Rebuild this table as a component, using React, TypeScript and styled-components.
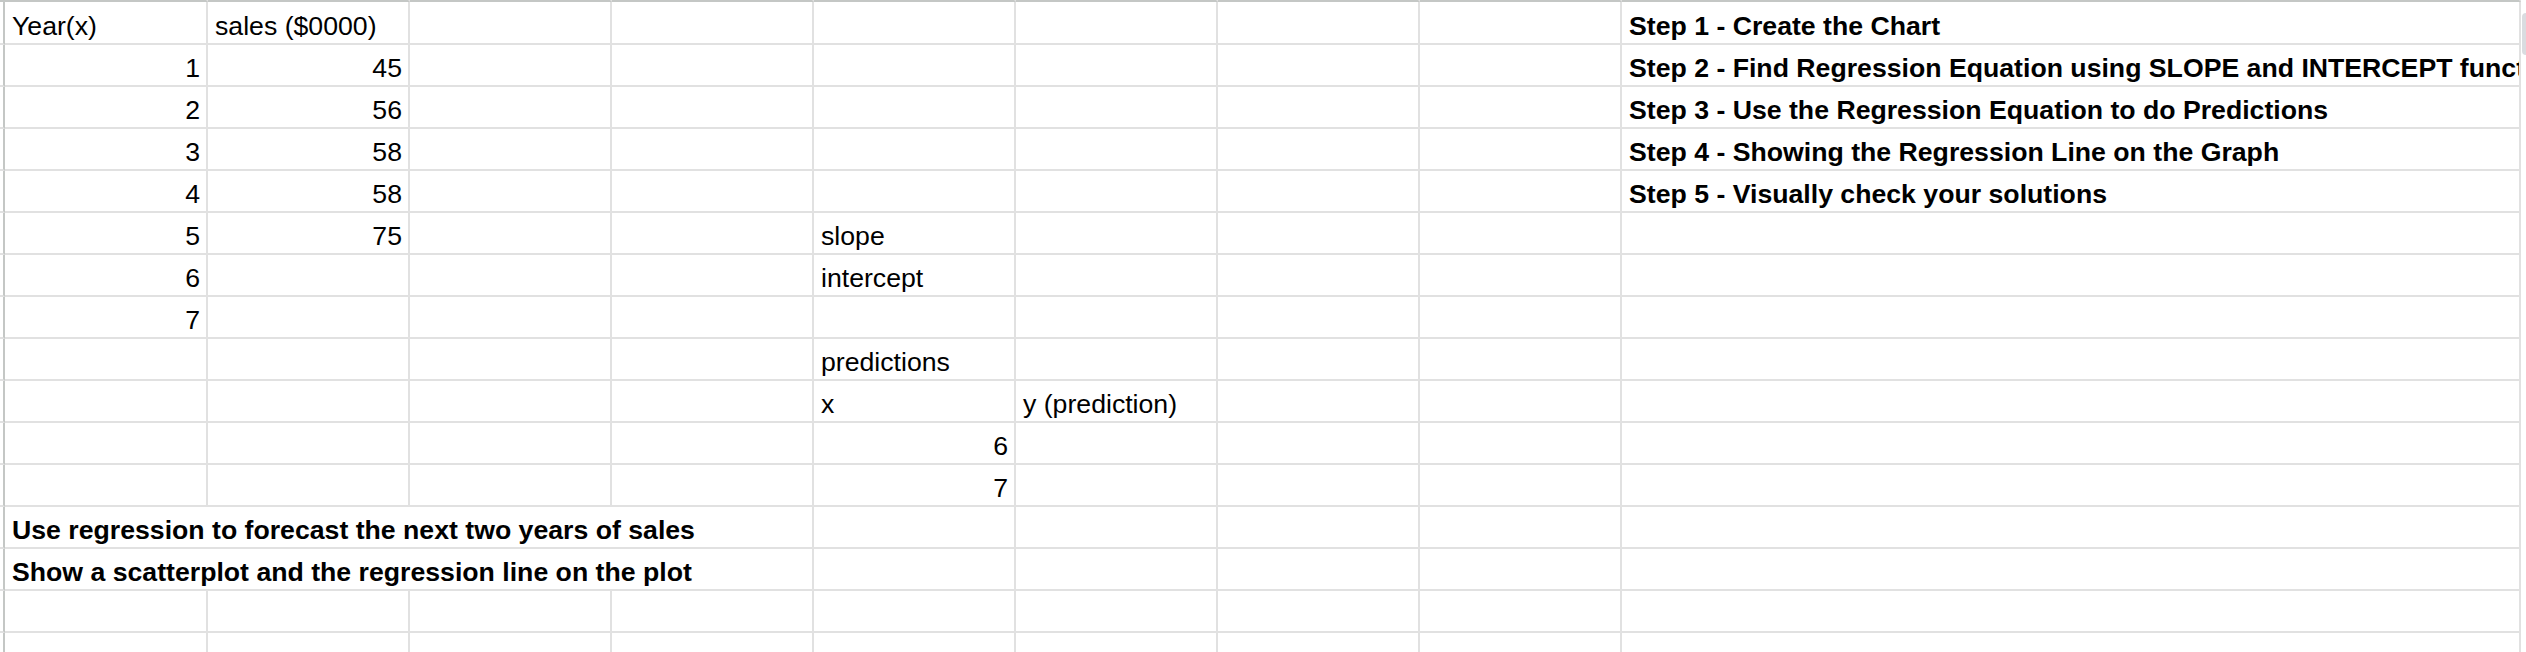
import styled, { createGlobalStyle } from "styled-components";

const GlobalStyle = createGlobalStyle`
html, body {
  margin: 0;
  padding: 0;
  background: #ffffff;
}
body {
  width: 2526px;
  height: 652px;
  overflow: hidden;
  font-family: "Liberation Sans", Arial, sans-serif;
  color: #000;
}
* {
  box-sizing: border-box;
}
`;

const COLS = "5px 203px repeat(7, 202px) 899px";
const GRID_LINE = "#e1e1e1";
const HEAD_LINE = "#c4c7c5";

const Page = styled.div`
  display: flex;
  width: 2526px;
  height: 652px;
  overflow: hidden;
`;

const Sheet = styled.div`
  display: flex;
  flex-direction: column;
  width: 2521px;
`;

const HeaderStrip = styled.div`
  display: grid;
  grid-template-columns: ${COLS};
  height: 6px;
`;

const Corner = styled.div`
  background: #f8f9fa;
  border-right: 2px solid ${HEAD_LINE};
  border-bottom: 2px solid ${HEAD_LINE};
`;

const ColHead = styled.div<{ $selected?: boolean }>`
  background: ${(p) => (p.$selected ? "#d3e3fd" : "#ffffff")};
  border-right: 2px solid ${GRID_LINE};
  border-bottom: 2px solid ${HEAD_LINE};
`;

const Row = styled.div<{ $h: number }>`
  display: grid;
  grid-template-columns: ${COLS};
  height: ${(p) => p.$h}px;
  flex-shrink: 0;
`;

const Gutter = styled.div`
  border-right: 2px solid ${HEAD_LINE};
  border-bottom: 2px solid ${GRID_LINE};
`;

const Cell = styled.div<{ $num?: boolean; $bold?: boolean; $span?: number }>`
  grid-column: span ${(p) => p.$span ?? 1};
  display: flex;
  align-items: flex-end;
  justify-content: ${(p) => (p.$num ? "flex-end" : "flex-start")};
  padding: 0 6px 2px 7px;
  border-right: 2px solid ${GRID_LINE};
  border-bottom: 2px solid ${GRID_LINE};
  font-size: 26.67px;
  line-height: 30px;
  font-weight: ${(p) => (p.$bold ? 700 : 400)};
  white-space: nowrap;
  overflow: hidden;
`;

const ScrollTrack = styled.div`
  width: 5px;
  display: flex;
  flex-direction: column;
  padding-top: 13px;
  border-top: 6px solid transparent;
`;

const ScrollThumb = styled.div`
  width: 4px;
  height: 42px;
  margin-left: 1px;
  margin-top: -6px;
  border-radius: 4px 0 0 4px;
  background: #dadce0;
`;

type CellData = { v?: string; num?: boolean; bold?: boolean; span?: number };

const e = (): CellData => ({});
const t = (v: string): CellData => ({ v });
const n = (v: string): CellData => ({ v, num: true });
const b = (v: string, span = 1): CellData => ({ v, bold: true, span });

const rows: CellData[][] = [
  [t("Year(x)"), t("sales ($0000)"), e(), e(), e(), e(), e(), e(), b("Step 1 - Create the Chart")],
  [n("1"), n("45"), e(), e(), e(), e(), e(), e(), b("Step 2 - Find Regression Equation using SLOPE and INTERCEPT functions")],
  [n("2"), n("56"), e(), e(), e(), e(), e(), e(), b("Step 3 - Use the Regression Equation to do Predictions")],
  [n("3"), n("58"), e(), e(), e(), e(), e(), e(), b("Step 4 - Showing the Regression Line on the Graph")],
  [n("4"), n("58"), e(), e(), e(), e(), e(), e(), b("Step 5 - Visually check your solutions")],
  [n("5"), n("75"), e(), e(), t("slope"), e(), e(), e(), e()],
  [n("6"), e(), e(), e(), t("intercept"), e(), e(), e(), e()],
  [n("7"), e(), e(), e(), e(), e(), e(), e(), e()],
  [e(), e(), e(), e(), t("predictions"), e(), e(), e(), e()],
  [e(), e(), e(), e(), t("x"), t("y (prediction)"), e(), e(), e()],
  [e(), e(), e(), e(), n("6"), e(), e(), e(), e()],
  [e(), e(), e(), e(), n("7"), e(), e(), e(), e()],
  [b("Use regression to forecast the next two years of sales", 4), e(), e(), e(), e(), e()],
  [b("Show a scatterplot and the regression line on the plot", 4), e(), e(), e(), e(), e()],
  [e(), e(), e(), e(), e(), e(), e(), e(), e()],
  [e(), e(), e(), e(), e(), e(), e(), e(), e()],
];

const App: React.FC = () => {
  return (
    <>
      <GlobalStyle />
      <Page>
        <Sheet>
          <HeaderStrip>
            <Corner />
            <ColHead $selected />
            <ColHead $selected />
            {Array.from({ length: 7 }).map((_, i) => (
              <ColHead key={i} />
            ))}
          </HeaderStrip>
          {rows.map((cells, r) => (
            <Row key={r} $h={r === 0 ? 43 : 42}>
              <Gutter />
              {cells.map((c, i) => (
                <Cell key={i} $num={c.num} $bold={c.bold} $span={c.span}>
                  {c.v}
                </Cell>
              ))}
            </Row>
          ))}
        </Sheet>
        <ScrollTrack>
          <ScrollThumb />
        </ScrollTrack>
      </Page>
    </>
  );
};

export default App;
